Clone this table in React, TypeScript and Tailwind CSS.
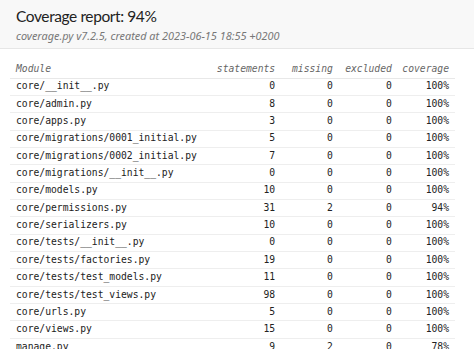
const rows: [string, number, number, number, string][] = [
  ['core/__init__.py', 0, 0, 0, '100%'],
  ['core/admin.py', 8, 0, 0, '100%'],
  ['core/apps.py', 3, 0, 0, '100%'],
  ['core/migrations/0001_initial.py', 5, 0, 0, '100%'],
  ['core/migrations/0002_initial.py', 7, 0, 0, '100%'],
  ['core/migrations/__init__.py', 0, 0, 0, '100%'],
  ['core/models.py', 10, 0, 0, '100%'],
  ['core/permissions.py', 31, 2, 0, '94%'],
  ['core/serializers.py', 10, 0, 0, '100%'],
  ['core/tests/__init__.py', 0, 0, 0, '100%'],
  ['core/tests/factories.py', 19, 0, 0, '100%'],
  ['core/tests/test_models.py', 11, 0, 0, '100%'],
  ['core/tests/test_views.py', 98, 0, 0, '100%'],
  ['core/urls.py', 5, 0, 0, '100%'],
  ['core/views.py', 15, 0, 0, '100%'],
  ['manage.py', 9, 2, 0, '78%'],
];

export default function App() {
  return (
    <div className="h-[349px] overflow-hidden bg-white text-[#222]">
      <header className="h-[49px] border-b border-[#e6e6e6] bg-[#f8f8f8] px-4 pt-[4px]">
        <h1 className="font-['Lato',sans-serif] text-[15.5px] leading-[24px] tracking-[-0.4px]">Coverage report: 94%</h1>
        <p className="mt-[1px] font-['Noto_Sans',sans-serif] text-[10.9px] italic leading-[14px] text-[#777]">
          coverage.py v7.2.5, created at 2023-06-15 18:55 +0200
        </p>
      </header>
      <main className="px-[10px] pt-[12px] font-['DejaVu_Sans_Mono',monospace] text-[9.7px]">
        <table className="w-[445px] border-collapse">
          <thead>
            <tr className="h-[17px] border-b border-[#e8e8e8] italic text-[#666]">
              <th className="pl-[6px] text-left font-normal">Module</th>
              <th className="w-[80px] text-right font-normal">statements</th>
              <th className="w-[59px] text-right font-normal">missing</th>
              <th className="w-[60px] text-right font-normal">excluded</th>
              <th className="w-[64px] pr-[6px] text-right font-normal">coverage</th>
            </tr>
          </thead>
          <tbody>
            {rows.map(([name, s, m, e, c]) => (
              <tr key={name} className="h-[17.35px] border-b border-[#eee]">
                <td className="pl-[6px]">{name}</td>
                <td className="text-right">{s}</td>
                <td className="text-right">{m}</td>
                <td className="text-right">{e}</td>
                <td className="pr-[6px] text-right">{c}</td>
              </tr>
            ))}
          </tbody>
        </table>
      </main>
    </div>
  );
}
